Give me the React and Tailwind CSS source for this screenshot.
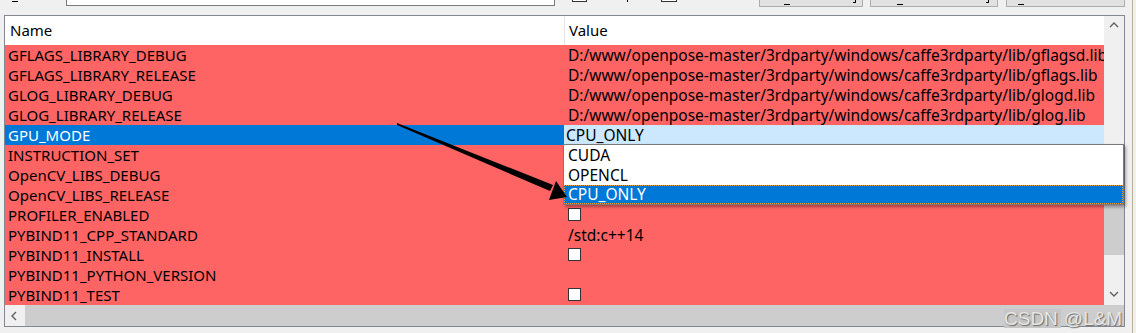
import React from 'react';

const libPath = 'D:/www/openpose-master/3rdparty/windows/caffe3rdparty/lib/';

const rows = [
  { name: 'GFLAGS_LIBRARY_DEBUG', value: libPath + 'gflagsd.lib' },
  { name: 'GFLAGS_LIBRARY_RELEASE', value: libPath + 'gflags.lib' },
  { name: 'GLOG_LIBRARY_DEBUG', value: libPath + 'glogd.lib' },
  { name: 'GLOG_LIBRARY_RELEASE', value: libPath + 'glog.lib' },
  { name: 'GPU_MODE', value: 'CPU_ONLY', selected: true },
  { name: 'INSTRUCTION_SET', value: '' },
  { name: 'OpenCV_LIBS_DEBUG', value: '' },
  { name: 'OpenCV_LIBS_RELEASE', value: '' },
  { name: 'PROFILER_ENABLED', check: true },
  { name: 'PYBIND11_CPP_STANDARD', value: '/std:c++14' },
  { name: 'PYBIND11_INSTALL', check: true },
  { name: 'PYBIND11_PYTHON_VERSION', value: '' },
  { name: 'PYBIND11_TEST', check: true },
];

const Chevron = ({ dir }) => {
  const d = {
    up: 'M1 6 L5 2 L9 6',
    down: 'M1 2 L5 6 L9 2',
    left: 'M6 1 L2 5 L6 9',
  }[dir];
  return (
    <svg width="10" height="10" viewBox="0 0 10 10">
      <path d={d} fill="none" stroke="#606060" strokeWidth="1.4" />
    </svg>
  );
};

const Row = ({ row }) => {
  if (row.selected) {
    return (
      <div className="flex h-[20px] leading-[20px]">
        <div className="w-[559px] h-full bg-[#0078d7] text-white pl-[3px]">{row.name}</div>
        <div className="flex-1 h-full bg-[#cce8ff] pl-[2px] text-[15.5px]">{row.value}</div>
      </div>
    );
  }
  return (
    <div className="flex h-[20px] leading-[20px] bg-[#ff6464] text-black">
      <div className="w-[559px] pl-[3px] whitespace-nowrap">{row.name}</div>
      <div className="flex-1 pl-[4px] whitespace-nowrap overflow-hidden h-[20px] text-[15.5px]">
        {row.check ? (
          <div className="mt-[3px] w-[13px] h-[13px] bg-white border border-[#333]" />
        ) : (
          row.value
        )}
      </div>
    </div>
  );
};

export default function App() {
  return (
    <div
      className="relative w-[1136px] h-[333px] bg-[#f0f0f0] overflow-hidden text-[15px] leading-none"
      style={{ fontFamily: '"Noto Sans", "Liberation Sans", sans-serif' }}
    >
      {/* cut-off toolbar */}
      <div className="flex items-start h-[15px]">
        <div className="ml-[12px] mt-[1px] w-[6px] h-[1px] bg-black" />
        <div className="ml-[48px] w-[489px] h-[6px] bg-white border-x border-b border-[#7a7a7a]" />
        <div className="ml-[17px] w-[15px] h-[2px] bg-white border-x border-b border-[#333]" />
        <div className="ml-[40px] w-[1px] h-[2px] bg-black" />
        <div className="ml-[33px] w-[16px] h-[2px] bg-white border-x border-b border-[#333]" />
        <div className="ml-[82px] w-[104px] h-[7px] bg-[#e1e1e1] border-x border-b border-[#adadad] flex items-start">
          <div className="ml-[24px] mt-[4px] w-[6px] h-[1px] bg-black" />
          <div className="ml-[63px] w-[3px] h-[3px] border-b border-r border-black" />
        </div>
        <div className="ml-[7px] w-[128px] h-[7px] bg-[#e1e1e1] border-x border-b border-[#adadad] flex items-start">
          <div className="ml-[26px] mt-[4px] w-[6px] h-[1px] bg-black" />
          <div className="ml-[83px] w-[3px] h-[3px] border-b border-r border-black" />
        </div>
        <div className="ml-[8px] w-[119px] h-[7px] bg-[#e1e1e1] border-x border-b border-[#adadad] flex items-start">
          <div className="ml-[11px] mt-[4px] w-[6px] h-[1px] bg-black" />
        </div>
      </div>

      {/* property table */}
      <div className="ml-[4px] w-[1121px] h-[312px] border border-[#828790] bg-white flex flex-col">
        <div className="flex h-[289px]">
          <div className="w-[1099px] flex flex-col">
            <div className="flex h-[29px] items-center bg-white">
              <div className="w-[559px] pl-[5px]">Name</div>
              <div className="h-full w-px bg-[#e5e5e5]" />
              <div className="flex-1 pl-[4px]">Value</div>
            </div>
            {rows.map((r) => (
              <Row key={r.name} row={r} />
            ))}
          </div>
          <div className="w-[20px] bg-[#f0f0f0] flex flex-col">
            <div className="h-[20px] flex items-center justify-center">
              <Chevron dir="up" />
            </div>
            <div className="flex-1">
              <div className="mt-[114px] h-[105px] bg-[#cdcdcd]" />
            </div>
            <div className="h-[20px] flex items-center justify-center">
              <Chevron dir="down" />
            </div>
          </div>
        </div>
        <div className="flex h-[21px]">
          <div className="w-[20px] bg-[#f0f0f0] flex items-center justify-center">
            <Chevron dir="left" />
          </div>
          <div className="flex-1 bg-[#cdcdcd]" />
        </div>
      </div>

      {/* far right edge */}
      <div className="absolute right-[3px] top-0 h-full w-px bg-[#b8ad98]" />

      {/* open combo dropdown */}
      <div className="absolute left-[563px] top-[144px] w-[561px] h-[61px] bg-white border border-[#7a7a7a] shadow-[2px_2px_3px_rgba(0,0,0,0.35)] flex flex-col leading-[20px] text-[15.5px]">
        <div className="h-[20px] pl-[4px]">CUDA</div>
        <div className="h-[20px] pl-[4px]">OPENCL</div>
        <div className="h-[19px] pl-[3px] leading-[17px] bg-[#0078d7] text-white border border-dotted border-[#e8a040]">CPU_ONLY</div>
      </div>

      {/* annotation arrow */}
      <svg className="absolute left-0 top-0 pointer-events-none" width="1136" height="333">
        <polygon points="397,123 553,185 550,191 397,125" fill="#000" />
        <polygon points="567,197 549,200 556,181" fill="#000" />
      </svg>

      {/* watermark */}
      <div
        className="absolute left-[1004px] top-[307px] h-[22px] flex items-center text-[19px] text-[#e6e6e6] [text-shadow:1px_1px_1px_#6a6a6a]"
        style={{ fontFamily: '"Liberation Sans", sans-serif' }}
      >
        <span className="bg-[#c6c6c6] pr-[3px]">CSDN</span>
        <span className="pl-[3px]">@L&amp;M</span>
      </div>
    </div>
  );
}
